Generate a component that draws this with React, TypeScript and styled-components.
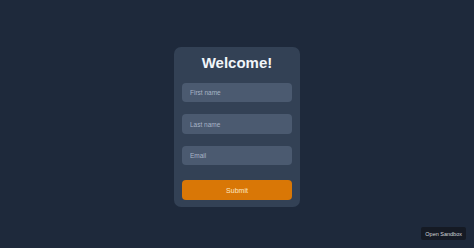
import styled, { createGlobalStyle } from "styled-components";

const GlobalStyle = createGlobalStyle`
  html, body {
    margin: 0;
    padding: 0;
    background-color: #1e293b;
    font-family: "Liberation Sans", Arial, sans-serif;
  }
`;

const Page = styled.div`
  width: 474px;
  height: 248px;
  display: flex;
  justify-content: center;
  padding-top: 47px;
  box-sizing: border-box;
  position: relative;
`;

const Card = styled.form`
  width: 126px;
  height: 160px;
  box-sizing: border-box;
  background-color: #334155;
  border-radius: 7px;
  padding: 5px 8px 7px;
  display: flex;
  flex-direction: column;
`;

const Title = styled.h1`
  margin: 0;
  color: #f1f5f9;
  font-size: 15px;
  line-height: 21px;
  font-weight: 700;
  text-align: center;
`;

const Field = styled.input`
  height: 20px;
  margin-top: ${(p: { $gap: number }) => p.$gap}px;
  box-sizing: border-box;
  border: none;
  outline: none;
  border-radius: 4px;
  background-color: #4b5a70;
  padding: 0 8px;
  color: #e2e8f0;
  font-family: inherit;
  font-size: 6.5px;

  &::placeholder {
    color: #a8b4c6;
  }
`;

const SubmitButton = styled.button`
  height: 20px;
  margin-top: 15px;
  border: none;
  border-radius: 4px;
  background-color: #d97706;
  color: #fde7c4;
  font-family: inherit;
  font-size: 7px;
  cursor: pointer;
`;

const SandboxButton = styled.button`
  position: absolute;
  right: 8px;
  bottom: 8px;
  height: 13px;
  padding: 0 4px;
  border: none;
  border-radius: 2px;
  background-color: #151a24;
  color: #d4d7dd;
  font-family: inherit;
  font-size: 5.5px;
`;

export default function App() {
  return (
    <>
      <GlobalStyle />
      <Page>
        <Card onSubmit={(e) => e.preventDefault()}>
          <Title>Welcome!</Title>
          <Field $gap={10} placeholder="First name" />
          <Field $gap={12} placeholder="Last name" />
          <Field $gap={12} placeholder="Email" />
          <SubmitButton type="submit">Submit</SubmitButton>
        </Card>
        <SandboxButton>Open Sandbox</SandboxButton>
      </Page>
    </>
  );
}
